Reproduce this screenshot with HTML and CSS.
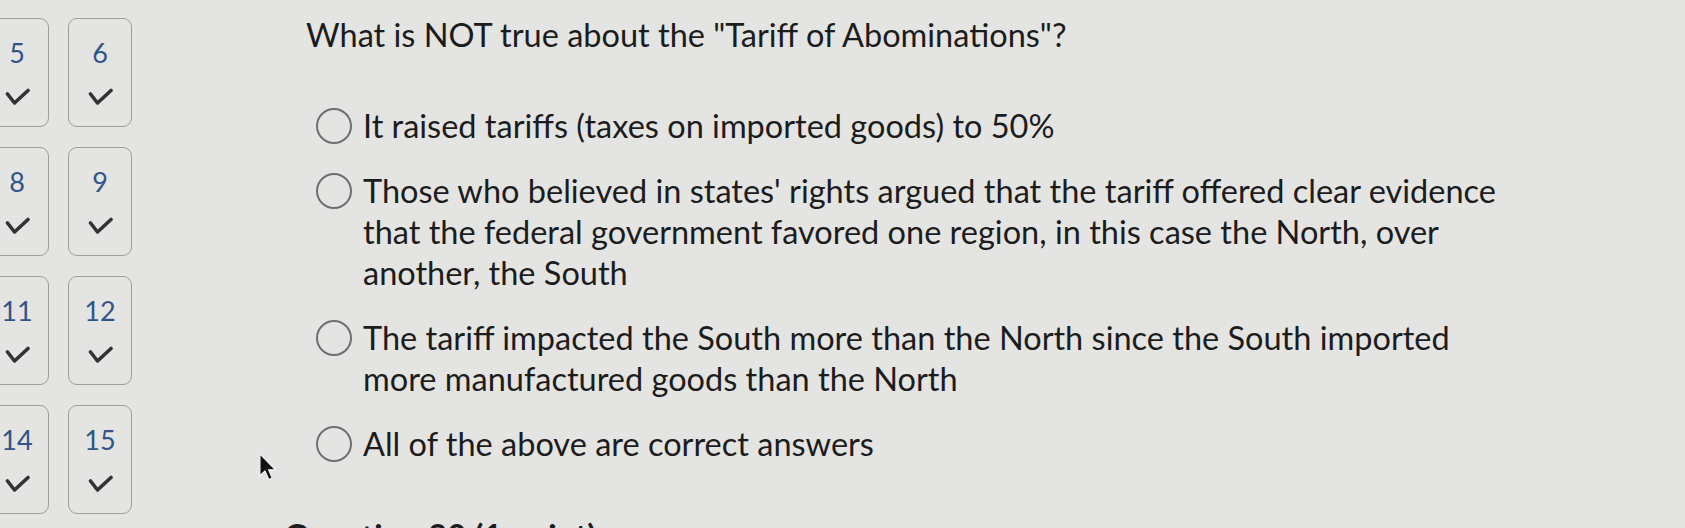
FILE: index.html
```html
<!DOCTYPE html>
<html lang="en">
<head>
<meta charset="utf-8">
<title>Quiz – Question 19</title>
<link rel="stylesheet" href="styles.css">
</head>
<body>
<div class="page">
  <nav class="q-nav">
    <div class="tile"><span class="num">1</span><svg class="tick" viewBox="0 0 25 18"><polyline points="2.5,6 9.5,15 23,2.5"/></svg></div>
    <div class="tile"><span class="num">2</span><svg class="tick" viewBox="0 0 25 18"><polyline points="2.5,6 9.5,15 23,2.5"/></svg></div>
    <div class="tile"><span class="num">3</span><svg class="tick" viewBox="0 0 25 18"><polyline points="2.5,6 9.5,15 23,2.5"/></svg></div>
    <div class="tile"><span class="num">4</span><svg class="tick" viewBox="0 0 25 18"><polyline points="2.5,6 9.5,15 23,2.5"/></svg></div>
    <div class="tile"><span class="num">5</span><svg class="tick" viewBox="0 0 25 18"><polyline points="2.5,6 9.5,15 23,2.5"/></svg></div>
    <div class="tile"><span class="num">6</span><svg class="tick" viewBox="0 0 25 18"><polyline points="2.5,6 9.5,15 23,2.5"/></svg></div>
    <div class="tile"><span class="num">7</span><svg class="tick" viewBox="0 0 25 18"><polyline points="2.5,6 9.5,15 23,2.5"/></svg></div>
    <div class="tile"><span class="num">8</span><svg class="tick" viewBox="0 0 25 18"><polyline points="2.5,6 9.5,15 23,2.5"/></svg></div>
    <div class="tile"><span class="num">9</span><svg class="tick" viewBox="0 0 25 18"><polyline points="2.5,6 9.5,15 23,2.5"/></svg></div>
    <div class="tile"><span class="num">10</span><svg class="tick" viewBox="0 0 25 18"><polyline points="2.5,6 9.5,15 23,2.5"/></svg></div>
    <div class="tile"><span class="num">11</span><svg class="tick" viewBox="0 0 25 18"><polyline points="2.5,6 9.5,15 23,2.5"/></svg></div>
    <div class="tile"><span class="num">12</span><svg class="tick" viewBox="0 0 25 18"><polyline points="2.5,6 9.5,15 23,2.5"/></svg></div>
    <div class="tile"><span class="num">13</span><svg class="tick" viewBox="0 0 25 18"><polyline points="2.5,6 9.5,15 23,2.5"/></svg></div>
    <div class="tile"><span class="num">14</span><svg class="tick" viewBox="0 0 25 18"><polyline points="2.5,6 9.5,15 23,2.5"/></svg></div>
    <div class="tile"><span class="num">15</span><svg class="tick" viewBox="0 0 25 18"><polyline points="2.5,6 9.5,15 23,2.5"/></svg></div>
  </nav>

  <main class="content">
    <section class="question">
      <h2 class="q-title">What is NOT true about the "Tariff of Abominations"?</h2>
      <ul class="options">
        <li class="option"><span class="radio"></span><span class="opt-text">It raised tariffs (taxes on imported goods) to 50%</span></li>
        <li class="option"><span class="radio"></span><span class="opt-text">Those who believed in states' rights argued that the tariff offered clear evidence that the federal government favored one region, in this case the North, over another, the South</span></li>
        <li class="option"><span class="radio"></span><span class="opt-text">The tariff impacted the South more than the North since the South imported more manufactured goods than the North</span></li>
        <li class="option"><span class="radio"></span><span class="opt-text">All of the above are correct answers</span></li>
      </ul>
    </section>
    <h2 class="next-heading">Question 20 (1 point)</h2>
  </main>
</div>

<svg class="pointer" viewBox="0 0 16 24" aria-hidden="true"><path d="M1.5 1.5 L1.5 19 L5.6 15.2 L8.6 22 L11.4 20.8 L8.5 14.2 L14 14.2 Z"/></svg>
</body>
</html>
```

FILE: styles.css
```css
html, body {
  margin: 0;
  padding: 0;
}

body {
  width: 1685px;
  height: 528px;
  overflow: hidden;
  background: #e4e4e2;
  font-family: Lato, "Open Sans", sans-serif;
  color: #1c1c1c;
  position: relative;
}

.page {
  display: flex;
  align-items: flex-start;
  height: 528px;
  overflow: hidden;
}

/* question navigator: 3 columns, scrolled partly out of view */
.q-nav {
  flex: none;
  display: grid;
  grid-template-columns: repeat(3, 64px);
  grid-auto-rows: 109px;
  column-gap: 19px;
  row-gap: 20px;
  margin-top: -111px;
  margin-left: -98px;
}

.tile {
  box-sizing: border-box;
  border: 1.5px solid #9d9d9b;
  border-radius: 9px;
  display: flex;
  flex-direction: column;
  align-items: center;
  padding-top: 20px;
}

.num {
  font-size: 27px;
  line-height: 27px;
  color: #30558a;
}

.tick {
  width: 25px;
  height: 18px;
  margin-top: 22px;
}

.tick polyline {
  fill: none;
  stroke: #333;
  stroke-width: 3.6;
  stroke-linecap: round;
  stroke-linejoin: round;
}

.content {
  flex: none;
  margin-left: 152px;
}

.question {
  padding-left: 22px;
  padding-top: 14px;
}

.q-title {
  margin: 0 0 50px;
  font-size: 32.5px;
  font-weight: 400;
  line-height: 41px;
}

.options {
  list-style: none;
  margin: 0;
  padding: 0 0 0 10px;
  display: flex;
  flex-direction: column;
  gap: 24px;
}

.option {
  display: flex;
  align-items: flex-start;
  gap: 11px;
}

.radio {
  flex: none;
  box-sizing: border-box;
  width: 36px;
  height: 36px;
  margin-top: 3px;
  border: 2px solid #6f6f6f;
  border-radius: 50%;
}

.opt-text {
  max-width: 1150px;
  font-size: 32.5px;
  line-height: 41px;
}

.next-heading {
  margin: 52px 0 0;
  font-size: 33px;
  font-weight: 700;
  line-height: 38px;
  color: #1c1c1c;
}

.pointer {
  position: absolute;
  left: 258px;
  top: 452px;
  width: 20px;
  height: 30px;
}

.pointer path {
  fill: #111;
  stroke: #f4f4f4;
  stroke-width: 1;
  stroke-linejoin: round;
}
```
